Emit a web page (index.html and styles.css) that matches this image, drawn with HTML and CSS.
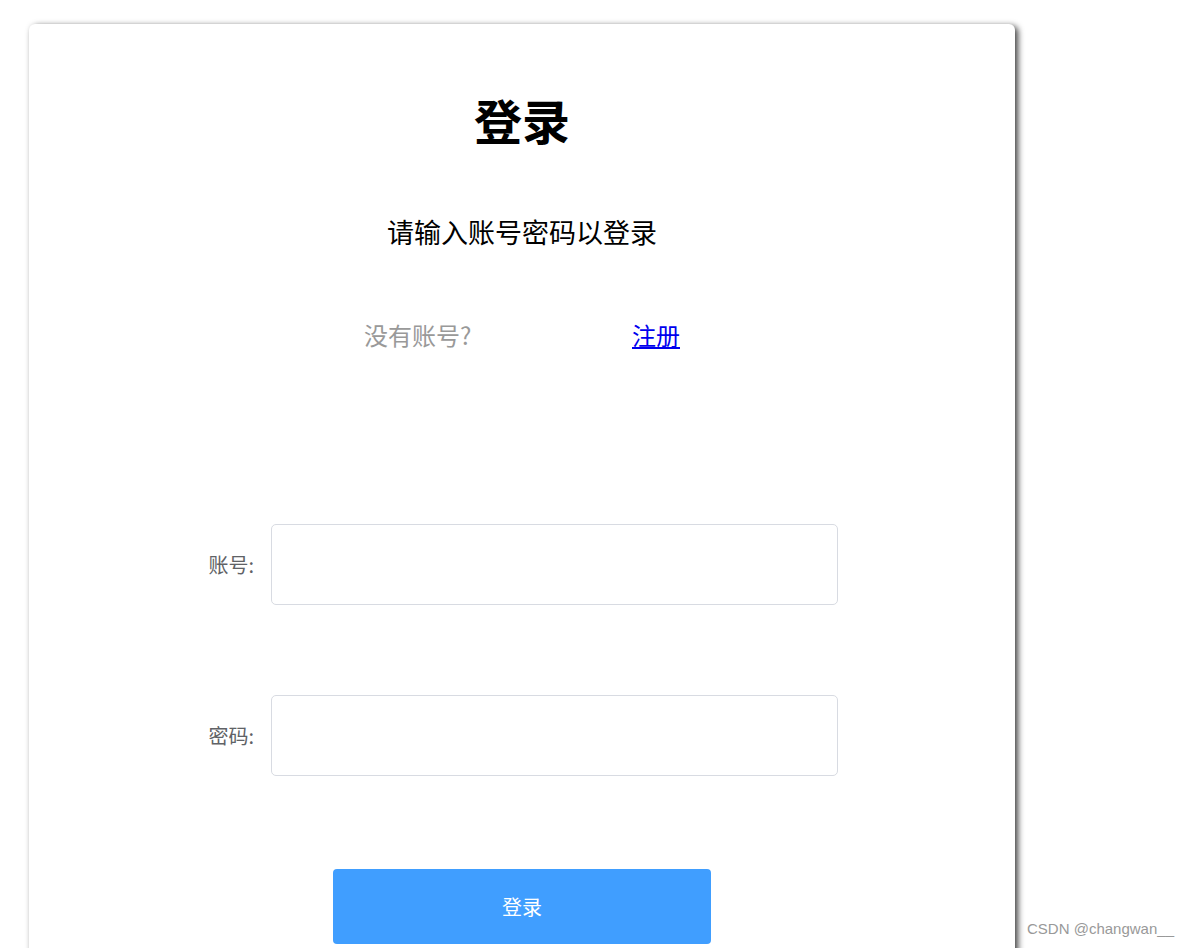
FILE: index.html
```html
<!DOCTYPE html>
<html lang="zh">
<head>
<meta charset="utf-8">
<title>登录</title>
<link rel="stylesheet" href="styles.css">
</head>
<body>
<div class="page">
  <div class="card">
    <h1 class="title">登录</h1>
    <p class="subtitle">请输入账号密码以登录</p>
    <div class="register-row">
      <span class="hint">没有账号?</span>
      <a class="link" href="#">注册</a>
    </div>
    <form class="form">
      <div class="form-row">
        <label class="label">账号:</label>
        <input class="input" type="text">
      </div>
      <div class="form-row">
        <label class="label">密码:</label>
        <input class="input" type="password">
      </div>
      <div class="btn-row">
        <button class="btn" type="button">登录</button>
      </div>
    </form>
  </div>
  <div class="watermark">CSDN @changwan__</div>
</div>
</body>
</html>
```
FILE: styles.css
```css
html, body {
  margin: 0;
  padding: 0;
  background: #fff;
  overflow: hidden;
}
body {
  font-family: "Noto Sans CJK SC", "Liberation Sans", sans-serif;
  height: 948px;
}
.page {
  position: relative;
  height: 948px;
  padding: 24px 0 0 29px;
  box-sizing: border-box;
}
.card {
  width: 986px;
  height: 1000px;
  background: #fff;
  border-radius: 6px;
  box-shadow: 3px 2px 6px rgba(0, 0, 0, 0.75);
  box-sizing: border-box;
  padding-top: 67px;
  display: flex;
  flex-direction: column;
  align-items: center;
}
.title {
  margin: 0;
  font-size: 48px;
  line-height: 56px;
  font-weight: 700;
  color: #000;
}
.subtitle {
  margin: 67px 0 0;
  font-size: 27px;
  line-height: 36px;
  color: #000;
}
.register-row {
  margin-top: 68px;
  width: 316px;
  display: flex;
  justify-content: space-between;
  font-size: 24px;
  line-height: 34px;
}
.hint {
  color: #999;
}
.link {
  color: #0000ee;
  text-decoration: underline;
}
.form {
  margin-top: 172px;
  display: flex;
  flex-direction: column;
  align-items: center;
}
.form-row {
  display: flex;
  align-items: center;
  margin-bottom: 90px;
}
.label {
  width: 65px;
  padding-right: 17px;
  text-align: right;
  box-sizing: border-box;
  font-size: 20px;
  color: #606266;
}
.input {
  width: 567px;
  height: 81px;
  box-sizing: border-box;
  border: 1px solid #d8dbe2;
  border-radius: 5px;
  outline: none;
  padding: 0 15px;
  font-size: 18px;
}
.btn-row {
  margin-top: 3px;
}
.btn {
  width: 378px;
  height: 75px;
  border: none;
  border-radius: 4px;
  background: #409eff;
  color: #fff;
  font-family: "Noto Sans CJK SC", sans-serif;
  font-size: 20px;
  cursor: pointer;
}
.watermark {
  position: absolute;
  left: 1027px;
  top: 920px;
  font-family: "Liberation Sans", sans-serif;
  font-size: 15px;
  color: #999;
}
```
